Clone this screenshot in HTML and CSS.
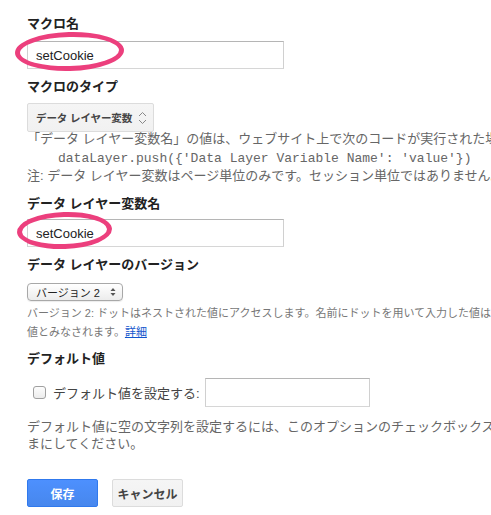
FILE: index.html
```html
<!DOCTYPE html>
<html lang="ja">
<head>
<meta charset="utf-8">
<title>マクロ</title>
<link rel="stylesheet" href="styles.css">
</head>
<body>
<form class="form">
  <div class="label l1">マクロ名</div>
  <div class="field-wrap f1">
    <input class="text-input wide" type="text" value="setCookie">
    <span class="mark mark1"></span>
  </div>

  <div class="label l2">マクロのタイプ</div>
  <div class="select-btn">
    <span>データ レイヤー変数</span>
    <svg class="chev" width="9" height="14" viewBox="0 0 9 14"><path d="M1 5 L4.5 1.5 L8 5" fill="none" stroke="#888" stroke-width="1"/><path d="M1 9 L4.5 12.5 L8 9" fill="none" stroke="#888" stroke-width="1"/></svg>
  </div>
  <p class="help help1">「データ レイヤー変数名」の値は、ウェブサイト上で次のコードが実行された場合に取得されます:</p>
  <pre class="code">dataLayer.push({'Data Layer Variable Name': 'value'})</pre>
  <p class="help note">注: データ レイヤー変数はページ単位のみです。セッション単位ではありません。</p>

  <div class="label l3">データ レイヤー変数名</div>
  <div class="field-wrap f2">
    <input class="text-input wide" type="text" value="setCookie">
    <span class="mark mark2"></span>
  </div>

  <div class="label l4">データ レイヤーのバージョン</div>
  <div class="mac-select">
    <span>バージョン 2</span>
    <svg class="tri" width="6" height="10" viewBox="0 0 6 10"><path d="M0.5 4 L3 1 L5.5 4 Z" fill="#555"/><path d="M0.5 6 L3 9 L5.5 6 Z" fill="#555"/></svg>
  </div>
  <p class="small-help">バージョン 2: ドットはネストされた値にアクセスします。名前にドットを用いて入力した値は、ネストされた<br>値とみなされます。<a href="#" class="link">詳細</a></p>

  <div class="label l5">デフォルト値</div>
  <div class="check-row">
    <span class="checkbox"></span>
    <span class="check-label">デフォルト値を設定する:</span>
    <input class="text-input short" type="text" value="">
  </div>
  <p class="help help2">デフォルト値に空の文字列を設定するには、このオプションのチェックボックスをオンにして入力欄を空のま<br>まにしてください。</p>

  <div class="actions">
    <button type="button" class="btn primary">保存</button>
    <button type="button" class="btn">キャンセル</button>
  </div>
</form>
</body>
</html>
```
FILE: styles.css
```css
html, body {
  margin: 0;
  padding: 0;
  overflow: hidden;
  background: #fff;
}
body {
  font-family: "Liberation Sans", "Noto Sans CJK JP", sans-serif;
  color: #222;
}
.form {
  padding: 15px 0 0 27px;
  width: 700px;
}
.label {
  font-size: 13px;
  font-weight: bold;
  line-height: 18px;
  color: #222;
  white-space: nowrap;
}
.l2 { margin-top: 9px; }
.l3 { margin-top: 10px; }
.l4 { margin-top: 9px; }
.l5 { margin-top: 8px; }

.field-wrap {
  position: relative;
  width: 257px;
}
.f1 { margin-top: 8px; }
.f2 { margin-top: 6px; }

.text-input {
  display: block;
  box-sizing: border-box;
  height: 28px;
  border: 1px solid #c0c0c0;
  border-top-color: #b5b5b5;
  border-left-color: #d0d0d0;
  border-right-color: #d0d0d0;
  border-bottom-color: #d6d6d6;
  border-radius: 0;
  padding: 0 8px;
  font-family: "Liberation Sans", "Noto Sans CJK JP", sans-serif;
  font-size: 13px;
  color: #222;
  background: #fff;
  outline: none;
}
.wide { width: 257px; }
.short { width: 165px; height: 29px; }

.mark {
  position: absolute;
  box-sizing: border-box;
  border: 5px solid #ec3f7d;
  border-radius: 50%;
  pointer-events: none;
}
.mark1 {
  left: -12px;
  top: -9px;
  width: 109px;
  height: 39px;
  transform: rotate(-1.5deg);
}
.mark2 {
  left: -10px;
  top: -7px;
  width: 95px;
  height: 37px;
  transform: rotate(-2deg);
}

.select-btn {
  margin-top: 7px;
  box-sizing: border-box;
  width: 127px;
  height: 29px;
  display: flex;
  align-items: center;
  justify-content: space-between;
  padding: 0 6px 0 8px;
  border: 1px solid #dcdcdc;
  border-radius: 2px;
  background: linear-gradient(#f5f5f5, #f1f1f1);
  font-size: 10.5px;
  letter-spacing: -0.1px;
  font-weight: bold;
  color: #444;
  white-space: nowrap;
}
.chev { display: block; }

.help {
  margin: 0;
  font-size: 13px;
  color: #666;
  white-space: nowrap;
}
.help1 { line-height: 14px; }
.code {
  margin: 5px 0 0 0;
  padding-left: 31px;
  font-family: "Liberation Mono", monospace;
  font-size: 13px;
  line-height: 16px;
  color: #666;
}
.note { line-height: 18px; }
.help2 {
  margin-top: 11px;
  line-height: 17px;
}

.mac-select {
  margin-top: 9px;
  box-sizing: border-box;
  width: 96px;
  height: 18px;
  display: flex;
  align-items: center;
  justify-content: space-between;
  padding: 0 6px 0 8px;
  border: 1px solid #a8a8a8;
  border-radius: 4px;
  background: linear-gradient(#ffffff, #ececec);
  box-shadow: 0 1px 1px rgba(0,0,0,0.08);
  font-size: 11px;
  color: #222;
  white-space: nowrap;
}
.tri { display: block; }

.small-help {
  margin: 3px 0 0 0;
  font-size: 11px;
  line-height: 19px;
  color: #777;
  white-space: nowrap;
}
.link {
  color: #15c;
  text-decoration: underline;
}

.check-row {
  margin-top: 10px;
  display: flex;
  align-items: center;
}
.checkbox {
  box-sizing: border-box;
  width: 13px;
  height: 13px;
  margin-left: 6px;
  border: 1px solid #a0a0a0;
  border-radius: 3px;
  background: linear-gradient(#fdfdfd, #ececec);
}
.check-label {
  margin-left: 7px;
  margin-right: 5px;
  font-size: 13px;
  color: #444;
  white-space: nowrap;
}

.actions {
  margin-top: 27px;
  display: flex;
  gap: 14px;
}
.btn {
  box-sizing: border-box;
  width: 71px;
  height: 28px;
  border: 1px solid #dcdcdc;
  border-radius: 2px;
  background: linear-gradient(#f5f5f5, #f1f1f1);
  font-family: "Liberation Sans", "Noto Sans CJK JP", sans-serif;
  font-size: 12px;
  font-weight: bold;
  color: #444;
  padding: 0;
}
.primary {
  border-color: #3079ed;
  background: linear-gradient(#4d90fe, #4787ed);
  color: #fff;
}
```
